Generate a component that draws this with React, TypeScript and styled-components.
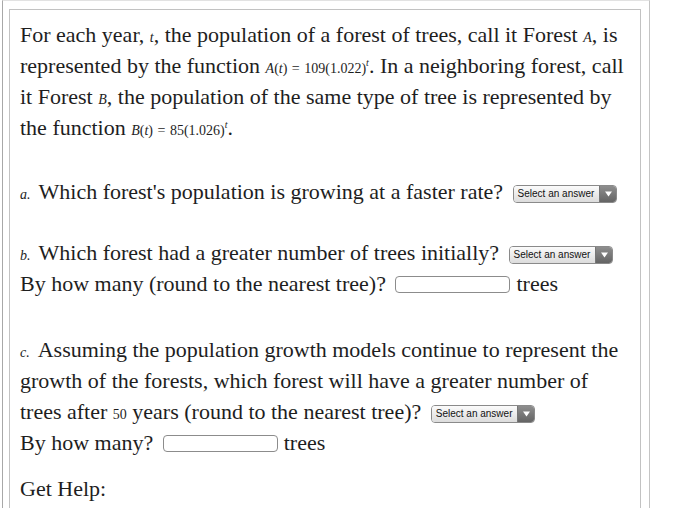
import React from 'react';
import styled, { createGlobalStyle } from 'styled-components';

const GlobalStyle = createGlobalStyle`
    html, body {
        margin: 0;
        padding: 0;
        background: #ffffff;
    }
`;

const Outer = styled.div`
    margin-left: 2px;
    width: 648px;
    height: 508px;
    border-left: 1px solid #a8a8a8;
    border-right: 1px solid #c4c4c4;
    border-top: 1px solid #e2e2e2;
    box-sizing: border-box;
    padding: 8px 8px 0 6px;
    overflow: hidden;
`;

const Card = styled.div`
    border: 1px solid #c2c2c2;
    border-bottom: none;
    height: 600px;
    padding: 9px 10px 0 10px;
    box-sizing: border-box;
    font-family: 'Liberation Serif', 'Times New Roman', serif;
    font-size: 22px;
    line-height: 31px;
    color: #1e1e1e;
`;

const Para = styled.p<{ $gap?: number }>`
    margin: 0;
    margin-top: ${(p) => p.$gap ?? 0}px;
`;

const M = styled.span`
    font-size: 14px;
    line-height: 1;
    word-spacing: 1px;
`;

const MI = styled.i`
    font-size: 14px;
    line-height: 1;
`;

const Sup = styled.sup`
    font-size: 10px;
    font-style: italic;
    vertical-align: 7px;
    line-height: 0;
`;

const Label = styled.i`
    font-size: 14px;
    line-height: 1;
    margin-right: 8px;
`;

const SelectBox = styled.span`
    display: inline-flex;
    align-items: stretch;
    height: 16px;
    vertical-align: 2px;
    margin-left: 4px;
    border: 1px solid #8a8a8a;
    border-radius: 4px;
    overflow: hidden;
    font-family: 'Liberation Sans', Arial, sans-serif;
    font-size: 10px;
    line-height: 16px;
    color: #111;
`;

const SelectText = styled.span`
    padding: 0 5px 0 4px;
    background: linear-gradient(#fbfbfb, #dcdcdc);
`;

const SelectArrow = styled.span`
    width: 16px;
    display: flex;
    align-items: center;
    justify-content: center;
    background: linear-gradient(#8e8e8e, #646464);
    border-left: 1px solid #777;
`;

const Field = styled.span<{ $w: number }>`
    display: inline-block;
    width: ${(p) => p.$w}px;
    height: 15px;
    vertical-align: -2px;
    margin: 0 6px 0 4px;
    border: 1px solid #8c8c8c;
    border-radius: 4px;
    background: #fff;
`;

const Select: React.FC = () => (
    <SelectBox>
        <SelectText>Select an answer</SelectText>
        <SelectArrow>
            <svg width="7" height="6" viewBox="0 0 7 6">
                <path d="M0 0.5h7L3.5 5.5z" fill="#ffffff" />
            </svg>
        </SelectArrow>
    </SelectBox>
);

export default function App() {
    return (
        <>
            <GlobalStyle />
            <Outer>
                <Card>
                    <Para>
                        For each year, <MI>t</MI>, the population of a forest of trees, call it Forest <MI>A</MI>, is
                        represented by the function{' '}
                        <M>
                            <i>A</i>(<i>t</i>) = 109(1.022)<Sup>t</Sup>
                        </M>
                        . In a neighboring forest, call it Forest <MI>B</MI>, the population of the same type of tree
                        is represented by the function{' '}
                        <M>
                            <i>B</i>(<i>t</i>) = 85(1.026)<Sup>t</Sup>
                        </M>
                        .
                    </Para>
                    <Para $gap={33}>
                        <Label>a.</Label>Which forest's population is growing at a faster rate? <Select />
                    </Para>
                    <Para $gap={30}>
                        <Label>b.</Label>Which forest had a greater number of trees initially? <Select />
                        <br />
                        By how many (round to the nearest tree)? <Field $w={113} />
                        trees
                    </Para>
                    <Para $gap={35}>
                        <Label>c.</Label>Assuming the population growth models continue to represent the growth of
                        the forests, which forest will have a greater number of trees after <M>50</M> years (round to
                        the nearest tree)? <Select />
                        <br />
                        By how many? <Field $w={113} />
                        trees
                    </Para>
                    <Para $gap={15}>Get Help:</Para>
                </Card>
            </Outer>
        </>
    );
}
